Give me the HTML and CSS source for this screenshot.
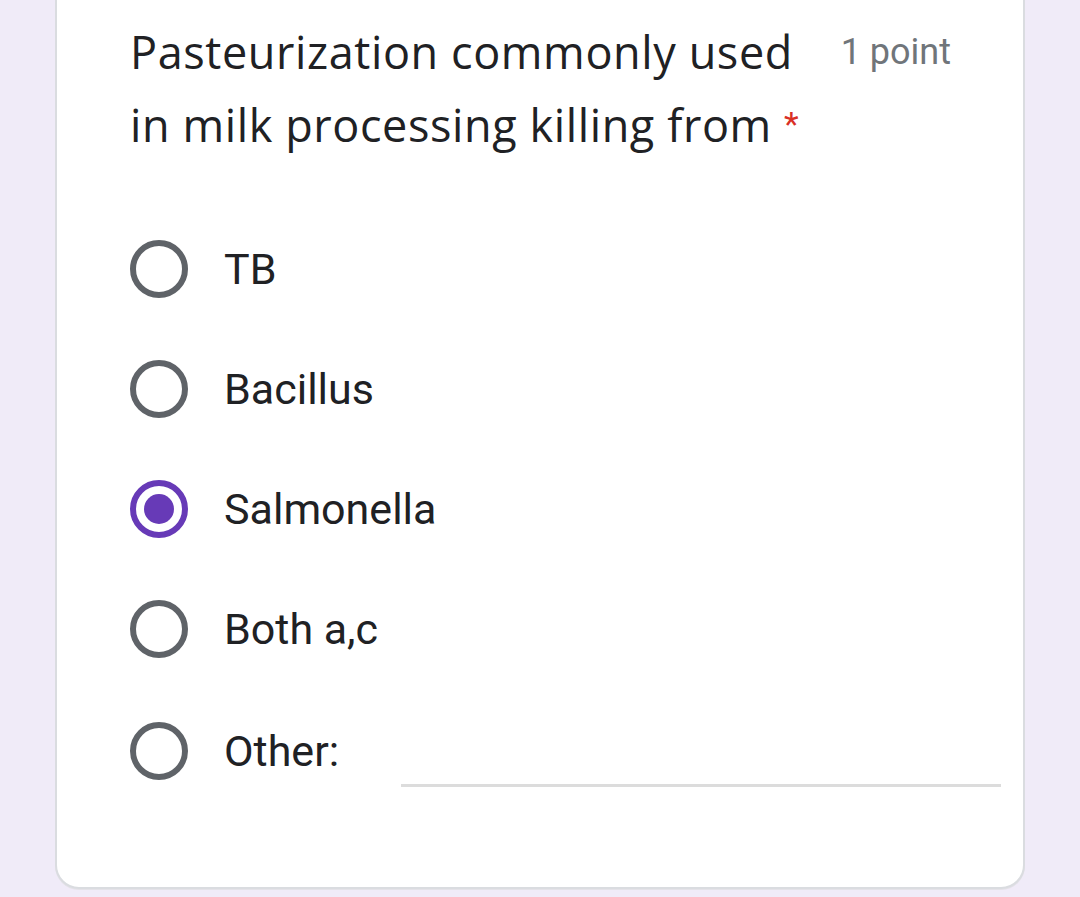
FILE: index.html
```html
<!DOCTYPE html>
<html lang="en">
<head>
<meta charset="utf-8">
<title>Question</title>
<link rel="stylesheet" href="styles.css">
</head>
<body>
<div class="page">
  <div class="card">
    <div class="header">
      <div class="title">Pasteurization commonly used in milk processing killing from <span class="req">*</span></div>
      <div class="points">1 point</div>
    </div>
    <div class="options">
      <div class="option"><span class="radio"></span><span class="label">TB</span></div>
      <div class="option"><span class="radio"></span><span class="label">Bacillus</span></div>
      <div class="option"><span class="radio checked"></span><span class="label">Salmonella</span></div>
      <div class="option"><span class="radio"></span><span class="label">Both a,c</span></div>
      <div class="option other"><span class="radio"></span><span class="label">Other:</span><span class="line"></span></div>
    </div>
  </div>
</div>
</body>
</html>
```

FILE: styles.css
```css
html, body {
  margin: 0;
  padding: 0;
  background: #f0ebf8;
  height: 100%;
  overflow: hidden;
}
.page {
  padding: 0 55px 0 55px;
}
.card {
  margin-top: -30px;
  background: #fff;
  border: 2px solid #dadce0;
  border-radius: 24px;
  padding: 44px 72px 74px 73px;
  box-shadow: 0 1px 0 #e4e2e8;
}
.header {
  display: flex;
  align-items: flex-start;
}
.title {
  flex: 1;
  font-family: "Open Sans", sans-serif;
  font-size: 45px;
  line-height: 72px;
  color: #202124;
  letter-spacing: 0.6px;
  max-width: 690px;
}
.req {
  color: #d93025;
  font-family: Roboto, sans-serif;
  font-size: 34px;
  vertical-align: 6px;
  margin-left: 0;
  letter-spacing: 0;
}
.points {
  margin-left: auto;
  font-family: Roboto, sans-serif;
  font-size: 36px;
  line-height: 72px;
  color: #70757a;
  white-space: nowrap;
}
.options {
  margin-top: 48px;
}
.option {
  display: flex;
  align-items: center;
  height: 120px;
}
.option.other {
  height: 124px;
}
.radio {
  box-sizing: border-box;
  width: 58px;
  height: 58px;
  border: 6px solid #5f6368;
  border-radius: 50%;
  flex: none;
  display: flex;
  align-items: center;
  justify-content: center;
}
.radio.checked {
  border-color: #673ab7;
}
.radio.checked::after {
  content: "";
  width: 30px;
  height: 30px;
  border-radius: 50%;
  background: #673ab7;
}
.label {
  margin-left: 36px;
  font-family: Roboto, sans-serif;
  font-size: 43px;
  color: #202124;
}
.line {
  align-self: flex-end;
  margin: 0 -50px 26px 62px;
  width: 600px;
  height: 3px;
  background: #dcdcdc;
}
```
